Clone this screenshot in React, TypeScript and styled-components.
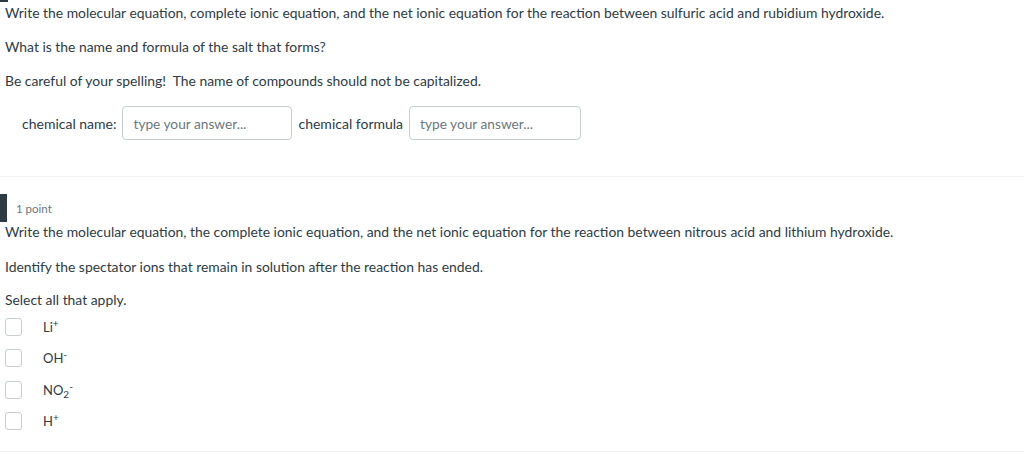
import React from "react";
import styled, { createGlobalStyle } from "styled-components";

const GlobalStyle = createGlobalStyle`
  html, body {
    margin: 0;
    padding: 0;
    background: #ffffff;
  }
  body {
    font-family: Lato, "Open Sans", "Liberation Sans", sans-serif;
    color: #2d3b45;
  }
`;

const Page = styled.div`
  width: 1024px;
  height: 453px;
  overflow: hidden;
  display: flex;
  flex-direction: column;
`;

const TopMark = styled.div`
  width: 8px;
  height: 2px;
  background: #2d3b45;
`;

const Question = styled.section`
  display: flex;
  flex-direction: column;
`;

const Text = styled.p<{ $gap?: number }>`
  margin: 0 0 ${(p) => p.$gap ?? 14}px;
  padding-left: 5px;
  font-size: 13.9px;
  line-height: 20px;
`;

const AnswerRow = styled.div`
  display: flex;
  align-items: center;
  gap: 6px;
  height: 34px;
  padding-left: 22px;
  margin-top: 1px;
  margin-bottom: 36px;
`;

const Label = styled.span`
  font-size: 14px;
`;

const AnswerInput = styled.input<{ $w: number }>`
  box-sizing: border-box;
  width: ${(p) => p.$w}px;
  height: 34px;
  border: 1px solid #c7cdd1;
  border-radius: 4px;
  padding: 0 10px;
  font-family: inherit;
  font-size: 13.7px;
  color: #2d3b45;
  outline: none;
  &::placeholder {
    color: #6b7780;
  }
`;

const Divider = styled.hr`
  margin: 0;
  border: none;
  border-top: 1px solid #f0f1f2;
  width: 100%;
`;

const Header = styled.div`
  display: flex;
  align-items: center;
  gap: 9px;
  margin-top: 17px;
  height: 28px;
`;

const Bar = styled.div`
  width: 7px;
  height: 28px;
  background: #2d3b45;
`;

const Points = styled.span`
  font-size: 11.5px;
  color: #6b7780;
  margin-top: 1px;
`;

const Options = styled.div`
  display: flex;
  flex-direction: column;
  margin-top: 1px;
  margin-bottom: 14px;
`;

const Option = styled.label`
  display: flex;
  align-items: center;
  gap: 21px;
  height: 31.5px;
  padding-left: 5px;
  font-size: 13px;
`;

const Box = styled.span`
  box-sizing: border-box;
  width: 17px;
  height: 18px;
  border: 1px solid #c7cdd1;
  border-radius: 3px;
  background: #fff;
`;

const Sup = styled.sup`
  font-size: 10px;
  vertical-align: 5px;
  line-height: 0;
`;

const Sub = styled.sub`
  font-size: 10px;
  vertical-align: -3px;
  line-height: 0;
`;

const options: React.ReactNode[] = [
  <>Li<Sup>+</Sup></>,
  <>OH<Sup>-</Sup></>,
  <>NO<Sub>2</Sub><Sup>-</Sup></>,
  <>H<Sup>+</Sup></>,
];

export default function App() {
  return (
    <Page>
      <GlobalStyle />
      <TopMark />
      <Question>
        <Text style={{ marginTop: 1 }}>
          Write the molecular equation, complete ionic equation, and the net ionic equation for the reaction between sulfuric acid and rubidium hydroxide.
        </Text>
        <Text>What is the name and formula of the salt that forms?</Text>
        <Text>Be careful of your spelling!&nbsp; The name of compounds should not be capitalized.</Text>
        <AnswerRow>
          <Label>chemical name:</Label>
          <AnswerInput $w={170} placeholder="type your answer..." />
          <Label>chemical formula</Label>
          <AnswerInput $w={172} placeholder="type your answer..." />
        </AnswerRow>
      </Question>
      <Divider />
      <Question>
        <Header>
          <Bar />
          <Points>1 point</Points>
        </Header>
        <Text $gap={15}>
          Write the molecular equation, the complete ionic equation, and the net ionic equation for the reaction between nitrous acid and lithium hydroxide.
        </Text>
        <Text $gap={13}>Identify the spectator ions that remain in solution after the reaction has ended.</Text>
        <Text $gap={0}>Select all that apply.</Text>
        <Options>
          {options.map((o, i) => (
            <Option key={i}>
              <Box />
              <span>{o}</span>
            </Option>
          ))}
        </Options>
      </Question>
      <Divider />
    </Page>
  );
}
